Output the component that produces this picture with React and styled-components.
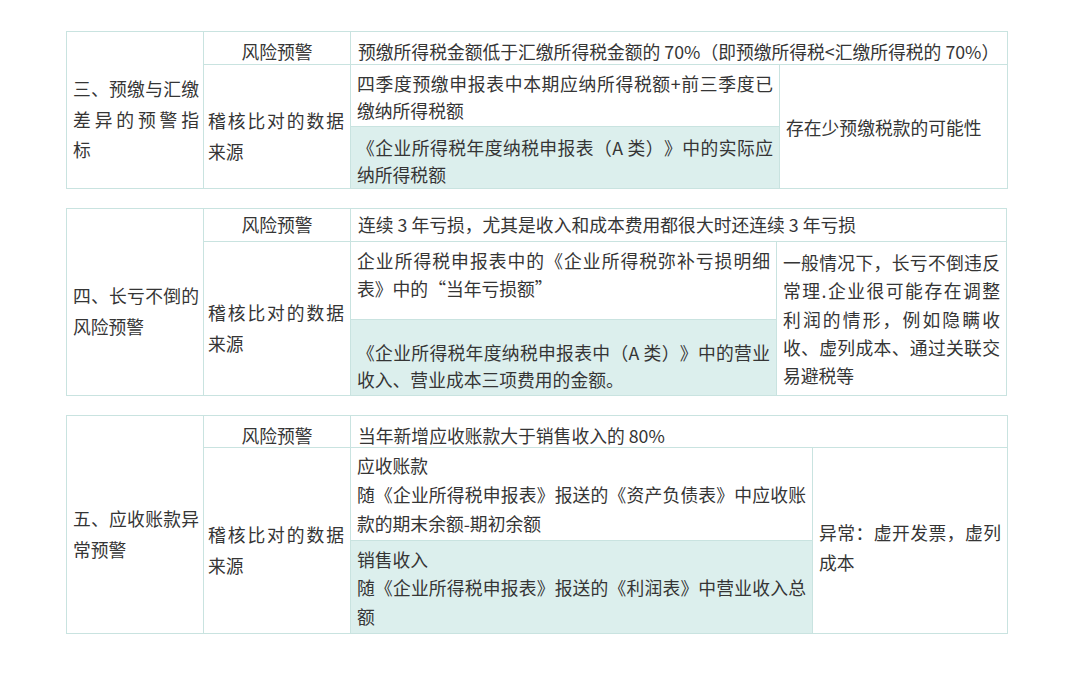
import React from 'react';
import styled, { createGlobalStyle, css } from 'styled-components';

const GlobalStyle = createGlobalStyle`
  html, body {
    margin: 0;
    padding: 0;
    background: #ffffff;
  }
  body {
    font-family: "Noto Sans CJK SC", "Noto Sans", sans-serif;
    color: #353535;
  }
`;

const BORDER = '#c9e3e0';
const TEAL = '#dcefed';

const Page = styled.div`
  width: 1080px;
  height: 678px;
  box-sizing: border-box;
  padding: 31px 0 0 66px;
  display: flex;
  flex-direction: column;
  align-items: flex-start;
  gap: 19px;
`;

const Table = styled.div`
  display: grid;
  grid-template-columns: 136px 146px ${(p) => p.$c3}px ${(p) => p.$c4}px;
  grid-template-rows: ${(p) => p.$rows.map((r) => `${r}px`).join(' ')};
  gap: 1px;
  padding: 1px;
  background: ${BORDER};
  font-size: 17.8px;
  text-spacing-trim: space-all;
`;

const BaseCell = styled.div`
  box-sizing: border-box;
  background: #ffffff;
  min-width: 0;
  overflow: hidden;
`;

const TitleCell = styled(BaseCell)`
  grid-column: 1;
  grid-row: 1 / 4;
  display: flex;
  flex-direction: column;
  justify-content: center;
  padding: 18px 4px 0 6px;
  line-height: 30.7px;
`;

const LabelCell = styled(BaseCell)`
  grid-column: 2;
  grid-row: 1;
  text-align: center;
  padding-top: ${(p) => p.$pt}px;
  line-height: 24px;
`;

const SourceCell = styled(BaseCell)`
  grid-column: 2;
  grid-row: 2 / 4;
  display: flex;
  flex-direction: column;
  justify-content: center;
  padding: 18px 6px 0 4px;
  line-height: 30.7px;
`;

const WarnCell = styled(BaseCell)`
  grid-column: 3 / 5;
  grid-row: 1;
  padding: ${(p) => p.$pt}px 6px 0 7px;
  line-height: 24px;
  white-space: nowrap;
`;

const DataCell = styled(BaseCell)`
  grid-column: 3;
  grid-row: ${(p) => p.$row};
  background: ${(p) => (p.$teal ? TEAL : '#ffffff')};
  padding: ${(p) => p.$pt}px 6px 0 6px;
  line-height: ${(p) => p.$lh}px;
`;

const NoteCell = styled(BaseCell)`
  grid-column: 4;
  grid-row: 2 / 4;
  padding: ${(p) => p.$pt}px 6px 0 6px;
  line-height: ${(p) => p.$lh}px;
`;

const Line = styled.div`
  ${(p) =>
    p.$spread &&
    css`
      text-align: justify;
      text-align-last: justify;
    `}
`;

const Lines = ({ items }) =>
  items.map(([text, spread], i) => (
    <Line key={i} $spread={!!spread}>
      {text}
    </Line>
  ));

const SOURCE = [['稽核比对的数据', 1], ['来源']];

const tables = [
  {
    c3: 428,
    c4: 227,
    rows: [32, 61, 61],
    lh: 27.4,
    rowPt: 7,
    title: [['三、预缴与汇缴', 1], ['差异的预警指', 1], ['标']],
    warn: '预缴所得税金额低于汇缴所得税金额的 70%（即预缴所得税<汇缴所得税的 70%）',
    white: { pt: 5, lines: [['四季度预缴申报表中本期应纳所得税额+前三季度已', 1], ['缴纳所得税额']] },
    teal: { pt: 7, lines: [['《企业所得税年度纳税申报表（A 类）》中的实际应', 1], ['纳所得税额']] },
    note: { pt: 49, lh: 27.4, lines: [['存在少预缴税款的可能性']] },
  },
  {
    c3: 425,
    c4: 229,
    rows: [32, 77, 75],
    lh: 27.5,
    rowPt: 3,
    title: [['四、长亏不倒的', 1], ['风险预警']],
    warn: '连续 3 年亏损，尤其是收入和成本费用都很大时还连续 3 年亏损',
    white: { pt: 5, lines: [['企业所得税申报表中的《企业所得税弥补亏损明细', 1], ['表》中的“当年亏损额”']] },
    teal: { pt: 18.5, lines: [['《企业所得税年度纳税申报表中（A 类）》中的营业', 1], ['收入、营业成本三项费用的金额。']] },
    note: {
      pt: 6,
      lh: 28.3,
      lines: [
        ['一般情况下，长亏不倒违反', 1],
        ['常理.企业很可能存在调整', 1],
        ['利润的情形，例如隐瞒收', 1],
        ['收、虚列成本、通过关联交', 1],
        ['易避税等'],
      ],
    },
  },
  {
    c3: 461,
    c4: 194,
    rows: [31, 92, 92],
    lh: 28.8,
    rowPt: 6.7,
    title: [['五、应收账款异', 1], ['常预警']],
    warn: '当年新增应收账款大于销售收入的 80%',
    white: {
      pt: 3.3,
      lines: [['应收账款'], ['随《企业所得税申报表》报送的《资产负债表》中应收账', 1], ['款的期末余额-期初余额']],
    },
    teal: {
      pt: 3.6,
      lines: [['销售收入'], ['随《企业所得税申报表》报送的《利润表》中营业收入总', 1], ['额']],
    },
    note: { pt: 69.3, lh: 30, lines: [['异常：虚开发票，虚列', 1], ['成本']] },
  },
];

export default function App() {
  return (
    <>
      <GlobalStyle />
      <Page>
        {tables.map((t, i) => (
          <Table key={i} $c3={t.c3} $c4={t.c4} $rows={t.rows}>
            <TitleCell>
              <Lines items={t.title} />
            </TitleCell>
            <LabelCell $pt={t.rowPt}>风险预警</LabelCell>
            <WarnCell $pt={t.rowPt}>{t.warn}</WarnCell>
            <SourceCell>
              <Lines items={SOURCE} />
            </SourceCell>
            <DataCell $row={2} $pt={t.white.pt} $lh={t.lh}>
              <Lines items={t.white.lines} />
            </DataCell>
            <NoteCell $pt={t.note.pt} $lh={t.note.lh}>
              <Lines items={t.note.lines} />
            </NoteCell>
            <DataCell $row={3} $teal $pt={t.teal.pt} $lh={t.lh}>
              <Lines items={t.teal.lines} />
            </DataCell>
          </Table>
        ))}
      </Page>
    </>
  );
}
